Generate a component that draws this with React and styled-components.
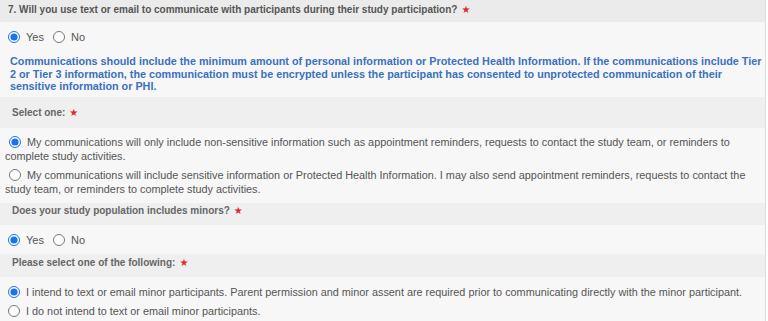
import styled, { createGlobalStyle } from "styled-components"

const GlobalStyle = createGlobalStyle`
  html, body {
    margin: 0;
    padding: 0;
    background: #ffffff;
  }
  body {
    font-family: "Liberation Sans", Arial, sans-serif;
  }
`

const Page = styled.div`
  width: 765px;
  height: 321px;
  overflow: hidden;
  background: #f7f7f7;
  border-right: 1px solid #dedede;
`

const Header = styled.div`
  height: 22px;
  line-height: 20px;
  padding-left: 8px;
  background: #ebebeb;
  color: #555;
  font-size: 10px;
  font-weight: bold;
`

const Label = styled.div`
  height: ${(p) => p.h}px;
  box-sizing: border-box;
  padding-top: ${(p) => p.pt}px;
  padding-left: 12px;
  line-height: 14px;
  background: #efefef;
  color: #666;
  font-size: 10px;
  font-weight: bold;
`

const Star = styled.span`
  color: #e8262b;
  font-family: "DejaVu Sans", sans-serif;
  font-size: 10px;
  margin-left: 4px;
`

const Section = styled.div`
  padding: ${(p) => p.pad};
`

const InlineRow = styled.div`
  display: flex;
  align-items: center;
  height: 14px;
  padding-left: 8px;
  margin-bottom: ${(p) => p.mb || 0}px;
`

const Choice = styled.label`
  display: inline-flex;
  align-items: center;
  margin-right: 9px;
  color: #555;
  font-size: 11px;
`

const Radio = styled.input.attrs({ type: "radio" })`
  width: 12px;
  height: 12px;
  margin: 0 ${(p) => p.gap || 6}px 0 ${(p) => p.ml || 0}px;
  accent-color: #1a73e8;
  vertical-align: -2px;
`

const Note = styled.div`
  padding-left: 10px;
  color: #3c70c0;
  font-size: 10.8px;
  font-weight: bold;
  line-height: 12.5px;
`

const Option = styled.div`
  padding-left: ${(p) => p.pl}px;
  margin-bottom: ${(p) => p.mb || 0}px;
  color: #555;
  font-size: 10.85px;
  line-height: ${(p) => p.lh || 13.5}px;
`

const YesNo = ({ name, mb }) => (
  <InlineRow mb={mb}>
    <Choice>
      <Radio name={name} defaultChecked />
      Yes
    </Choice>
    <Choice>
      <Radio name={name} />
      No
    </Choice>
  </InlineRow>
)

const App = () => {
  return (
    <>
      <GlobalStyle />
      <Page>
        <Header>
          7. Will you use text or email to communicate with participants during their study participation?
          <Star>★</Star>
        </Header>

        <Section pad="8px 0 4.5px">
          <YesNo name="q7" mb={11} />
          <Note>
            Communications should include the minimum amount of personal information or Protected Health
            Information. If the communications include Tier 2 or Tier 3 information, the communication must be
            encrypted unless the participant has consented to unprotected communication of their sensitive
            information or PHI.
          </Note>
        </Section>

        <Label h={31} pt={9}>
          Select one:<Star>★</Star>
        </Label>

        <Section pad="8px 0 7px">
          <Option pl={5} mb={6}>
            <Radio name="sel" ml={4} defaultChecked />
            My communications will only include non-sensitive information such as appointment reminders,
            requests to contact the study team, or reminders to complete study activities.
          </Option>
          <Option pl={5}>
            <Radio name="sel" ml={4} />
            My communications will include sensitive information or Protected Health Information. I may also send
            appointment reminders, requests to contact the study team, or reminders to complete study activities.
          </Option>
        </Section>

        <Label h={22} pt={1}>
          Does your study population includes minors?<Star>★</Star>
        </Label>

        <Section pad="8px 0 7px">
          <YesNo name="minors" />
        </Section>

        <Label h={23} pt={2}>
          Please select one of the following:<Star>★</Star>
        </Label>

        <Section pad="8px 0 0">
          <Option pl={8} mb={5} lh={14}>
            <Radio name="minor" defaultChecked />
            I intend to text or email minor participants. Parent permission and minor assent are required prior to
            communicating directly with the minor participant.
          </Option>
          <Option pl={8} lh={14}>
            <Radio name="minor" />
            I do not intend to text or email minor participants.
          </Option>
        </Section>
      </Page>
    </>
  )
}

export default App
